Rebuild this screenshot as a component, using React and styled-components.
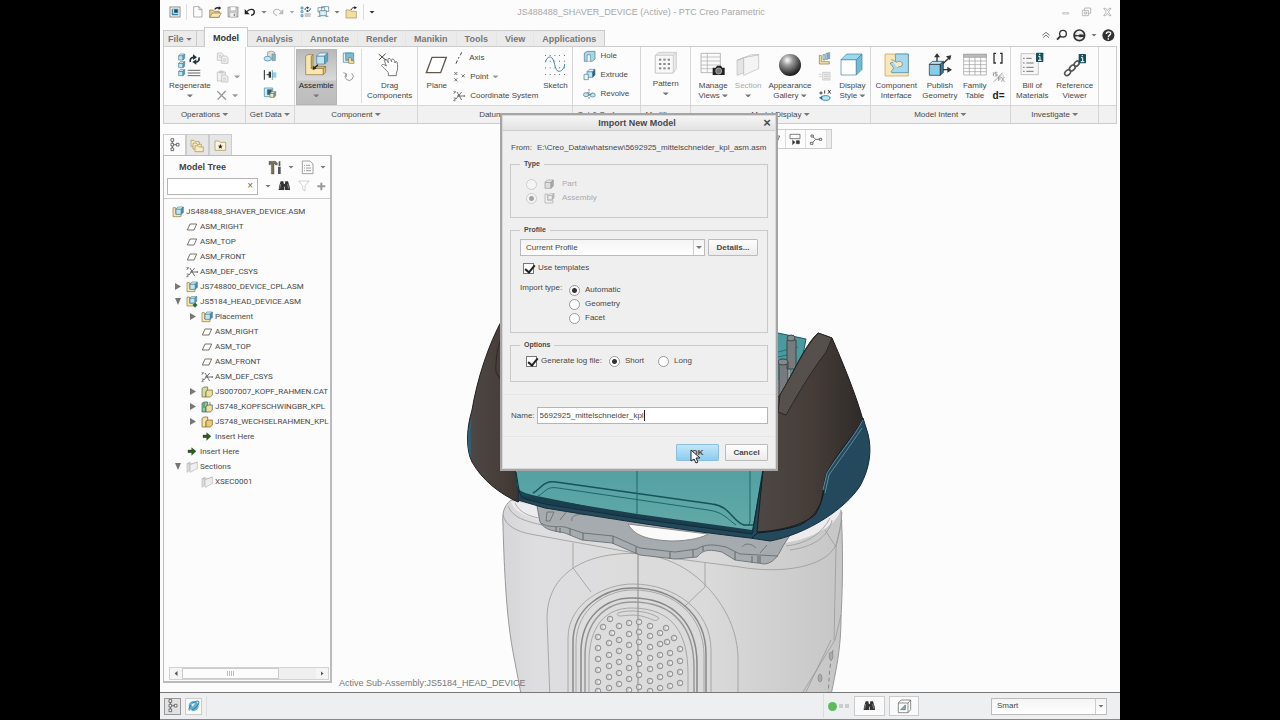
import React from 'react'
import styled, { createGlobalStyle, css } from 'styled-components'

const GlobalStyle = createGlobalStyle`
  * {
    box-sizing: border-box;
  }
  body {
    margin: 0;
    background: #000;
    color: #484848;
    font: 8px/10px "Liberation Sans", Arial, sans-serif;
  }
  button, input, select {
    margin: 0;
    padding: 0;
    border: 0;
    background: none;
    color: inherit;
    font: inherit;
  }
  ul {
    margin: 0;
    padding: 0;
    list-style: none;
  }
  svg {
    display: block;
    flex: none;
  }
`

/* ---------- icons ---------- */

const Cube = ({ x, y, w, d, front = '#bfe6f5', top = '#e4f5fb', side = '#5aa9c8', line = '#4a7f96' }) => (
  <g stroke={line} strokeWidth="2" strokeLinejoin="round">
    <path d={`M${x} ${y + d}h${w}v${w}h${-w}z`} fill={front} />
    <path d={`M${x} ${y + d}l${d} ${-d}h${w}l${-d} ${d}z`} fill={top} />
    <path d={`M${x + w} ${y + d}l${d} ${-d}v${w}l${-d} ${d}z`} fill={side} />
  </g>
)

const Binoculars = () => (
  <g fill="#333">
    <path d="M8 4h8l2 10v16H2l1-10z" />
    <path d="M22 4h8l5 16 1 10H20V14z" />
    <path d="M14 12h10v8H14z" />
    <path d="M8 12l-3 14M29 12l3 14" stroke="#aaa" strokeWidth="2" />
  </g>
)

const Axes = () => (
  <g stroke="#555" strokeWidth="2.5" fill="none">
    <path d="M12 18h18M8 28L26 6M12 6l14 24" />
    <path d="M2 3l5 6M8 3L2 12M2 24h6l-6 8h6M31 15l5 6M36 15l-5 6" strokeWidth="2" />
  </g>
)

const TreeNodes = () => (
  <g fill="#fff" stroke="#555" strokeWidth="2.5">
    <path d="M10 4v32M10 20h14" fill="none" />
    <path d="M6 2h8v8H6zM6 16h8v8H6zM6 30h8v8H6zM22 16h8v8h-8z" />
  </g>
)

const Info = ({ x, y }) => (
  <g>
    <rect x={x} y={y} width="22" height="28" rx="2" fill="#16505c" />
    <path d={`M${x + 7} ${y + 11}h5v11M${x + 6} ${y + 23}h11M${x + 9} ${y + 5}h4`} stroke="#fff" strokeWidth="3" fill="none" />
  </g>
)

// every drawing is on a grid of three units to one pixel
const icons = {
  app: [36, 36, <g><rect x="3" y="3" width="30" height="30" fill="#fff" stroke="#555" strokeWidth="2" /><path d="M8 8h20v20H8z" fill="#3b7f9c" /><path d="M13 8v14h15" stroke="#cfeaf5" strokeWidth="3" fill="none" /><path d="M17 12h8v7h-8z" fill="#17485e" /></g>],
  doc: [36, 36, <path d="M5 2h16l9 9v22H5zM21 2v9h9" fill="#fff" stroke="#888" strokeWidth="2" />],
  open: [39, 39, <g><path d="M2 12h11l4 4h14v18H2z" fill="#e9cd86" stroke="#8c7440" strokeWidth="2" /><path d="M2 34l8-13h27l-8 13z" fill="#f7e7b8" stroke="#8c7440" strokeWidth="2" /><path d="M17 10c5-6 10-6 15-2" stroke="#222" strokeWidth="4" fill="none" /><path d="M29 1l8 5-8 6z" fill="#222" /></g>],
  save: [36, 36, <g><path d="M3 3h30v30H3z" fill="#c9c9c9" stroke="#888" strokeWidth="2" /><path d="M10 3h16v11H10z" fill="#fff" stroke="#999" /><path d="M9 20h18v13H9z" fill="#f4f4f4" stroke="#999" /><path d="M20 23h4v8h-4z" fill="#888" /></g>],
  undo: [36, 30, <g><path d="M8 14C18 3 31 6 31 15c0 6-4 9-10 10" stroke="#222" strokeWidth="4" fill="none" /><path d="M2 6v16h15z" fill="#222" /></g>],
  redo: [36, 30, <g><path d="M28 14C18 3 5 6 5 15c0 6 4 9 10 10" stroke="#aaa" strokeWidth="3" fill="none" /><path d="M34 6v16H19z" fill="#bbb" /></g>],
  regenSmall: [36, 36, <g><path d="M3 3h6v6H3zM3 14h6v6H3zM3 26h6v6H3z" fill="#bfe6f5" stroke="#3b8099" strokeWidth="2" /><path d="M14 24h18M14 30h18" stroke="#666" strokeWidth="2" /><path d="M15 12c0-7 5-8 8-7M31 7c0 7-5 9-9 8" stroke="#1f5568" strokeWidth="3" fill="none" /><path d="M21 1l7 4-7 5zM24 11v8l-7-4z" fill="#1f5568" /></g>],
  windows: [39, 36, <g fill="#fff" stroke="#3d7389" strokeWidth="2"><path d="M3 5h20v13H3zM14 2h21v14H14z" /><path d="M8 14h20v15H8z" fill="#d9f0f8" /><path d="M2 31h9M25 31h9" /></g>],
  closeWin: [39, 39, <g><path d="M3 12h12l3 4h16v20H3z" fill="#f3dfa4" stroke="#a68c50" strokeWidth="2" /><path d="M18 12c2-6 7-8 12-7" stroke="#222" strokeWidth="3" fill="none" /><path d="M28 0l8 5-8 5z" fill="#222" /></g>],
  regenerate: [78, 75, <g><Cube x={5} y={3} w={13} d={5} /><Cube x={5} y={26} w={13} d={5} /><Cube x={5} y={50} w={13} d={5} /><path d="M32 52h38M32 60h38M32 68h38" stroke="#666" strokeWidth="3" /><path d="M40 27c-2-9 3-14 9-14M66 13c2 9-3 14-9 14" stroke="#20323a" strokeWidth="5" fill="none" /><path d="M48 4l12 9-12 8zM58 19v16l-12-8z" fill="#20323a" /></g>],
  copy: [42, 36, <g fill="#f2f2f2" stroke="#b5b5b5" strokeWidth="2"><path d="M4 3h13l5 5v17H4z" /><path d="M17 12h13l6 5v17H17zM21 21h10M21 27h10M8 10h7M8 15h7" /></g>],
  paste: [42, 39, <g fill="#f2f2f2" stroke="#b5b5b5" strokeWidth="2"><path d="M4 6h24v27H4zM11 3h10v6H11z" /><path d="M17 15h13l6 5v16H17zM21 24h10M21 30h10" /></g>],
  del: [36, 33, <path d="M4 4l26 25M29 3L5 29" stroke="#999" strokeWidth="4" />],
  geom: [42, 39, <g stroke="#888" strokeWidth="2"><path d="M14 6l12-3 9 4v20H14z" fill="#e2dfd8" /><ellipse cx="14" cy="26" rx="11" ry="7" fill="#bfe6f5" stroke="#3b8099" /><path d="M27 12h10v20H27z" fill="#7fb9cf" /></g>],
  shrink: [42, 36, <g><path d="M4 3v29M12 17h12" stroke="#222" strokeWidth="3" /><path d="M17 8h7v18h-7z" fill="#333" /><path d="M28 10h12v16H28z" fill="#93cfe8" /><path d="M28 3v30M16 17H8" stroke="#3b8099" strokeWidth="2" /></g>],
  copyGeom: [42, 39, <g stroke="#3b8099" strokeWidth="2"><path d="M4 3h25v26H4z" fill="#d5eef7" /><path d="M13 8h13v15H13z" fill="#256078" /><Cube x={21} y={14} w={12} d={5} front="#f5ecc4" line="#7c7140" /></g>],
  assemble: [75, 78, <g stroke="#8c7440" strokeWidth="2" strokeLinejoin="round"><path d="M5 14l5-6h17l-5 6v35h36v19H5z" fill="#f8e6ae" /><path d="M22 14l5-6v36l-5 5zM58 49l7-7v19l-7 7zM22 49l5-6h38l-7 6z" fill="#dcc07a" /><Cube x={38} y={3} w={24} d={9} /><path d="M42 38L29 50" stroke="#222" strokeWidth="4" /><path d="M26 54l2-12 9 8z" fill="#222" stroke="none" /></g>],
  create: [42, 39, <g stroke="#3b8099" strokeWidth="2"><path d="M4 3h26v28H4z" fill="#e7f2f5" /><path d="M11 3h24v22H11z" fill="#7dbbd3" /><path d="M20 17h8v9h8v8H20z" fill="#f5e4a8" stroke="#8c7440" /></g>],
  repeat: [42, 39, <g fill="none" stroke="#999" strokeWidth="3"><path d="M12 12a12 12 0 1 0 17 -2" /><path d="M4 8l9 3v10" /></g>],
  drag: [69, 75, <g stroke="#777" strokeWidth="3" fill="#fff" strokeLinecap="round" strokeLinejoin="round"><path d="M24 51c-6-6-12-10-13-14 1-5 8-3 14 2-3-9-8-17-4-20 4-1 8 4 10 10-2-7-2-13 2-13 5 0 6 6 8 11-1-6 0-9 4-9 4 1 5 6 6 12 1-5 4-6 6-3 3 8 3 23-2 34v7H31v-8z" /><path d="M3 4l20 17M22 3L4 20" stroke="#4d4636" strokeWidth="3" /></g>],
  plane: [69, 66, <path d="M21 10h43L47 56H4z" fill="#fff" stroke="#63574c" strokeWidth="4" />],
  axis: [36, 39, <path d="M9 35l4-10M16 20l2-5M22 10l4-9" stroke="#444" strokeWidth="3" />],
  points: [39, 36, <path d="M4 3l9 9M13 3l-9 9M26 10l9 9M35 10l-9 9M4 22l9 9M13 22l-9 9" stroke="#555" strokeWidth="2.5" />],
  csys: [39, 36, <Axes />],
  sketch: [69, 66, <g><g fill="#777">{[3, 17, 31, 45, 60].map(x => [3, 20, 40, 60].map(y => <rect key={x + '-' + y} x={x} y={y} width="3" height="3" />))}</g><path d="M4 25C9 6 23 3 29 21c5 15 6 32 17 31 10-1 16-14 16-22" fill="none" stroke="#2f8cb0" strokeWidth="3" /></g>],
  hole: [39, 39, <g><path d="M4 9l8-5h24v23l-8 7h-6V15h-9v19H4z" fill="#a9d6e7" stroke="#47788c" strokeWidth="2" /><path d="M13 15h9v19h-9z" fill="#f2fafd" stroke="#47788c" /></g>],
  extrude: [39, 39, <g stroke="#47788c" strokeWidth="2"><Cube x={12} y={4} w={17} d={7} side="#256078" /><path d="M3 19h13v16H3z" fill="#e9f4f8" /></g>],
  revolve: [39, 36, <g fill="#bfe6f5" stroke="#47788c" strokeWidth="2"><ellipse cx="9" cy="20" rx="8" ry="6" /><ellipse cx="29" cy="21" rx="8" ry="6" /><path d="M18 3v30" stroke="#333" strokeDasharray="5 3" /><path d="M12 12c5 8 11 10 17 3" fill="none" /></g>],
  pattern: [72, 75, <g><path d="M4 13L13 4h54v49l-9 13H4z" fill="#e9e9e9" stroke="#c0c0c0" strokeWidth="2" /><path d="M4 13h54v53H4z" fill="#f8f8f8" stroke="#c0c0c0" strokeWidth="2" /><path d="M58 13l9-9" stroke="#c0c0c0" strokeWidth="2" />{[15, 28, 41].map(x => [23, 36, 49].map(y => <path key={x + '-' + y} d={`M${x} ${y}h7v6h-7z`} fill="#8b8b8b" />))}</g>],
  manage: [78, 78, <g><path d="M3 4h58v58H3z" fill="#fafafa" stroke="#999" strokeWidth="2" /><path d="M3 15h58M3 27h58M3 39h58M3 50h58M22 4v58" stroke="#aaa" strokeWidth="2" /><path d="M38 47h9l4-6h12l4 6h7v22H38z" fill="#222" /><circle cx="56" cy="57" r="9" fill="#777" stroke="#ccc" strokeWidth="2" /></g>],
  section: [72, 75, <g stroke="#bbb" strokeWidth="2"><path d="M3 22l20-8v46L3 67z" fill="#e5e5e5" /><path d="M23 14L68 5v42L23 67z" fill="#f4f4f4" /><path d="M3 22L46 5h22l-45 9z" fill="#fafafa" /></g>],
  display: [72, 75, <Cube x={3} y={3} w={46} d={17} front="#fcfefe" top="#9adaf0" side="#6fbcd8" />],
  scale: [39, 39, <g fill="#d9eef6" stroke="#47788c" strokeWidth="2"><path d="M4 10h6v19h24v7H4z" fill="#f5e4a8" stroke="#8c7440" /><path d="M15 8h6v16h-6zM24 4h5v18h-5zM31 2h4v18h-4z" /></g>],
  notes: [39, 33, <g fill="#eee" stroke="#bbb" strokeWidth="2"><path d="M14 4h22v23H14zM3 10h8M3 17h8M18 10h14M18 16h14M18 22h14" /></g>],
  transform: [42, 39, <g><path d="M4 12h10M9 7v10M20 4v10M30 3l8 11M38 3l-8 11" stroke="#222" strokeWidth="2.5" /><ellipse cx="23" cy="27" rx="13" ry="7" fill="#bfe6f5" stroke="#2f8cb0" strokeWidth="3" /><path d="M13 20L3 26l10 7z" fill="#2f6c84" /></g>],
  iface: [75, 75, <g strokeWidth="2"><path d="M3 3h70v66H3z" fill="#fbe6b6" stroke="#b79c5c" /><path d="M35 3h38v56H23c-4-5 2-7 5-11 3-6-9-12-9-18 7-4 11-2 15-7 3-7-3-14 1-20z" fill="#a8d8ee" stroke="#3b7f9c" /><path d="M22 20c10 1 11 9 19 7 8-6 18 3 13 11-4 5-10 1-14 6" fill="#fbe6b6" stroke="#3b7f9c" /></g>],
  publish: [72, 75, <g><path d="M27 4v28M30 46l34-32M30 50h37" stroke="#333" strokeWidth="4" /><path d="M27 1l-9 12h18zM70 7l-16 3 12 12zM72 50l-14-9v18z" fill="#333" /><Cube x={4} y={25} w={33} d={9} front="#86cdea" top="#b9e5f5" side="#347f9f" line="#222" /></g>],
  family: [72, 72, <g stroke="#999" strokeWidth="2"><path d="M2 4h68v62H2z" fill="#fff" /><path d="M2 4h68v9H2z" fill="#bbb" /><path d="M2 24h68M2 35h68M2 46h68M2 56h68M19 13v53M36 13v53M53 13v53" /></g>],
  brackets: [36, 39, <path d="M12 4H6v29h6M24 4h6v29h-6" fill="none" stroke="#333" strokeWidth="4" />],
  dim: [39, 36, <g stroke="#888" strokeWidth="2.5" fill="none"><path d="M4 4v11M9 4h7M9 4v5h6v6H9M32 5L6 32M20 30V18h8M19 24h7M28 18l9 14M37 18l-9 14" /><path d="M24 12h10v20" stroke="#ccc" /></g>],
  bom: [72, 78, <g><path d="M3 5h42l10 10v53H3z" fill="#f6f6f6" stroke="#aaa" strokeWidth="2" /><path d="M19 19h16M19 33h22M19 46h22M19 58h22M9 19h5M9 33h5M9 46h5M9 58h5" stroke="#777" strokeWidth="3" /><Info x={48} y={2} /></g>],
  viewer: [72, 75, <g><g fill="none" stroke="#555" strokeWidth="5"><ellipse cx="14" cy="59" rx="10" ry="7" transform="rotate(-45 14 59)" /><ellipse cx="28" cy="45" rx="10" ry="7" transform="rotate(-45 28 45)" /><ellipse cx="41" cy="32" rx="9" ry="6" transform="rotate(-45 41 32)" /></g><Info x={47} y={3} /></g>],
  chevrons: [30, 24, <path d="M4 13L15 4l11 9M6 20l9-8 9 8" fill="none" stroke="#555" strokeWidth="2.5" />],
  search: [36, 36, <g fill="none" stroke="#333"><circle cx="21" cy="14" r="10" strokeWidth="4" /><path d="M13 22L3 32" strokeWidth="6" /></g>],
  learn: [39, 39, <g><circle cx="19" cy="19" r="16" fill="#eee" stroke="#333" strokeWidth="5" /><path d="M3 16l12 3 6-3 15 1v6l-15 2-6-3-12 1z" fill="#333" /></g>],
  help: [39, 39, <g><circle cx="19" cy="19" r="18" fill="#333" /><path d="M13 15c0-9 14-8 13-1-1 5-7 4-7 11M19 28v4" fill="none" stroke="#fff" strokeWidth="4" /></g>],
  min: [30, 30, <path d="M5 17h18v4H5z" fill="#fff" stroke="#aaa" strokeWidth="2" />],
  restore: [33, 30, <g fill="#fff" stroke="#999" strokeWidth="2"><path d="M11 3h18v16H11z" /><path d="M4 10h18v16H4zM10 15h7v6h-7z" /></g>],
  close: [33, 30, <path d="M5 4h6l5 7 5-7h6l-8 11 8 11h-6l-5-7-5 7H5l8-11z" fill="#fff" stroke="#999" strokeWidth="2" />],
  nodes: [33, 42, <TreeNodes />],
  folders: [45, 45, <g fill="#f9edc6" stroke="#a68c50" strokeWidth="2"><path d="M3 7h9l3 4h13v14H3z" /><path d="M9 15h9l3 4h13v14H9z" /><path d="M15 23h9l3 4h13v14H15z" /></g>],
  favorite: [39, 39, <g><path d="M3 6h12l4 4h16v24H3z" fill="#fbf4da" stroke="#a68c50" strokeWidth="2" /><path d="M19 14l2 6h6l-5 3 2 6-5-3-5 3 2-6-5-3h6z" fill="#222" /></g>],
  tools: [42, 45, <g><path d="M3 4h20l5 6v5h-5l-3-4h-2v31h-8V12l-7 3z" fill="#7b7159" stroke="#333" strokeWidth="1" /><path d="M32 4h5v14h-5zM30 20h8v22h-8z" fill="#555" /></g>],
  settings: [42, 45, <g><path d="M4 3h23l9 9v29H4z" fill="#fbfbfb" stroke="#777" strokeWidth="2" /><path d="M15 16h12M15 24h15M15 32h15M9 16h3M9 24h3M9 32h3" stroke="#777" strokeWidth="2" /></g>],
  find: [39, 36, <Binoculars />],
  filter: [36, 36, <path d="M2 3h31L21 18v15l-7-5V18z" fill="#fff" stroke="#bbb" strokeWidth="2" />],
  plus: [27, 27, <path d="M10 2h6v8h9v6h-9v9h-6v-9H1v-6h9z" fill="#999" />],
  asm: [36, 36, <g strokeWidth="2"><path d="M3 5h8v19h16v8H3z" fill="#f8e6ae" stroke="#8c7440" /><Cube x={12} y={3} w={16} d={6} side="#3b8fb3" /></g>],
  asmActive: [36, 36, <g strokeWidth="2"><path d="M3 3h8v19h14v8H3z" fill="#f8e6ae" stroke="#8c7440" /><Cube x={12} y={1} w={15} d={5} /><path d="M27 19l8 8-8 8-8-8z" fill="#1e6b2c" stroke="#fff" strokeWidth="1" /></g>],
  datum: [36, 30, <path d="M12 6h20l-8 18H4z" fill="#fff" stroke="#63574c" strokeWidth="2.5" />],
  part: [36, 36, <g stroke="#6b5a2c" strokeWidth="2"><path d="M3 7l6-4h11v10l-5 3v17H3z" fill="#cfe0a6" /><path d="M15 16l6-4h13v15l-6 6H15z" fill="#f3df9c" /></g>],
  partB: [36, 36, <g stroke="#6b5a2c" strokeWidth="2"><path d="M3 7l6-4h11v10l-5 3v17H3z" fill="#f6e3a2" /><path d="M15 16l6-4h13v15l-6 6H15z" fill="#efc96f" /></g>],
  partC: [36, 36, <g stroke="#2e5a44" strokeWidth="2"><path d="M3 7l6-4h11v10l-5 3v17H3z" fill="#8fc7a9" /><path d="M15 16l6-4h13v15l-6 6H15z" fill="#f3df9c" /><path d="M9 5v16M27 3v9" /></g>],
  insert: [30, 27, <path d="M3 9h11V2l13 11-13 12v-8H3z" fill="#2d5a22" stroke="#173a10" strokeWidth="1" />],
  xsec: [39, 36, <g stroke="#b8b8b8" strokeWidth="2"><path d="M3 8l9-5v24l-9 7z" fill="#dcdcdc" /><path d="M12 11l22-8v20l-22 11z" fill="#efefef" /><path d="M3 8h18l13-5" fill="none" /></g>],
  partGrey: [33, 33, <Cube x={3} y={3} w={18} d={7} front="#ddd" top="#eee" side="#aaa" line="#999" />],
  asmGrey: [33, 33, <g strokeWidth="2"><path d="M3 3h8v19h16v8H3z" fill="#eee" stroke="#aaa" /><Cube x={12} y={2} w={13} d={5} front="#eee" top="#f5f5f5" side="#bbb" line="#aaa" /></g>],
  browser: [42, 42, <g><circle cx="20" cy="21" r="15" fill="#5fb0d0" /><path d="M7 35C1 26 20 6 33 6c8 2-2 20-18 27" fill="none" stroke="#2d7797" strokeWidth="3" /><path d="M12 18c3-5 8-6 12-5l-6 10z" fill="#d8f1fa" /></g>],
  region: [45, 45, <g fill="#fff" stroke="#555" strokeWidth="2"><path d="M4 12L12 3h29v29l-8 9H4zM4 12h29v29M33 12l8-9" /><path d="M25 18v14H11l14-14z" fill="#7fb9cf" /></g>],
  spin: [42, 39, <g stroke="#555" strokeWidth="2.5" fill="#fff"><path d="M10 10l10 9M20 19h14M20 19L8 31" /><path d="M6 6h7v6H6zM31 16h7v6h-7zM4 28h8v6H4z" /></g>],
  layers: [42, 39, <g fill="#fff" stroke="#444" strokeWidth="2"><path d="M6 4h30v13H6z" /><path d="M13 21l8 7-8 7M25 23h9v9h-9z" fill="#333" /></g>],
}

const Icon = ({ name, label }) => {
  const [w, h, art] = icons[name]
  return (
    <svg width={w / 3} height={h / 3} viewBox={`0 0 ${w} ${h}`} aria-hidden={!label} aria-label={label}>
      {art}
    </svg>
  )
}

const Ball = () => (
  <svg width="24" height="24" viewBox="0 0 24 24" aria-hidden="true">
    <defs>
      <radialGradient id="ball" cx="38%" cy="28%" r="70%">
        <stop offset="0" stopColor="#fff" />
        <stop offset=".35" stopColor="#999" />
        <stop offset="1" stopColor="#1d1d1d" />
      </radialGradient>
    </defs>
    <circle cx="12" cy="12" r="11" fill="url(#ball)" />
  </svg>
)

const Caret = styled.span`
  display: inline-block;
  flex: none;
  width: 6px;
  height: 3px;
  vertical-align: middle;
  background: ${props => props.color || '#777'};
  clip-path: polygon(0 0, 100% 0, 50% 100%);
`

/* ---------- window, title bar, tabs ---------- */

const Page = styled.div`
  min-height: 100vh;
  padding: 0 12.5%;
  display: flex;
`

const Window = styled.div`
  position: relative;
  flex: 1;
  min-width: 0;
  display: flex;
  flex-direction: column;
  background: #fcfcfc;
`

const TitleBar = styled.header`
  height: 24px;
  padding: 0 7px 0 9px;
  display: grid;
  grid-template-columns: 1fr auto 1fr;
  align-items: center;
`

const QuickAccess = styled.div`
  display: flex;
  align-items: center;
  gap: 5px;
`

const PlainButton = styled.button`
  display: flex;
  align-items: center;
  justify-content: center;
  gap: ${props => props.$gap || 0}px;
  cursor: pointer;
`

const Rule = styled.span`
  width: 1px;
  height: ${props => props.$h || 16}px;
  background: #ddd;
`

const Title = styled.h1`
  margin: 0;
  color: #a8a8a8;
  font-size: 9px;
  font-weight: normal;
`

const WindowButtons = styled.div`
  display: flex;
  justify-content: flex-end;
  gap: 10px;
`

const TabRow = styled.div`
  height: 22px;
  padding: 0 5px 0 3px;
  display: flex;
  align-items: flex-end;
  justify-content: space-between;
`

const Tabs = styled.nav`
  display: flex;
  align-items: flex-end;
`

const Tab = styled.button`
  height: 16px;
  padding: 0 ${props => props.$pad || 8}px;
  border-top: 1px solid #ccc;
  border-right: 1px solid #e4e4e4;
  background: #ebebeb;
  color: #777;
  font-size: 9px;
  font-weight: bold;
  &:first-child {
    border-left: 1px solid #ccc;
    border-right-color: #ccc;
  }
  &:last-child {
    border-right-color: #ccc;
  }
  ${props => props.$active && css`
    height: 20px;
    margin-bottom: -1px;
    border: 1px solid #ccc;
    border-bottom: 0;
    background: #fcfcfc;
    color: #333;
    z-index: 1;
  `}
`

const Helpers = styled.div`
  height: 22px;
  display: flex;
  align-items: center;
  gap: 5px;
`

/* ---------- ribbon ---------- */

const RibbonBar = styled.div`
  height: 78px;
  margin: 0 3px;
  display: flex;
  border: 1px solid #ccc;
`

const Group = styled.section`
  flex: ${props => props.$span} 1 0;
  min-width: 0;
  display: flex;
  flex-direction: column;
  border-right: 1px solid #d6d6d6;
  &:last-child {
    border-right: 0;
  }
`

const GroupBody = styled.div`
  flex: 1;
  padding: 2px ${props => props.$right || props.$pad}px 0 ${props => props.$pad}px;
  display: flex;
  justify-content: ${props => props.$center ? 'center' : 'space-between'};
`

const GroupName = styled.button`
  height: 18px;
  border-top: 1px solid #d6d6d6;
  background: #f1f1f1;
  white-space: nowrap;
`

const BigButton = styled.button`
  height: 56px;
  padding: 2px ${props => props.$active ? 2 : 0}px 0;
  display: flex;
  flex-direction: column;
  align-items: center;
  white-space: nowrap;
  color: ${props => props.$dim ? '#aaa' : '#484848'};
  ${props => props.$active && css`
    padding-top: 1px;
    border: 1px solid #b5b5b5;
    background: linear-gradient(#b9b9b9, #d9d9d9 30px, #c4c4c4 31px, #bcbcbc);
    color: #222;
  `}
`

const BigIcon = styled.span`
  height: 28px;
  margin-bottom: 2px;
  display: flex;
  align-items: center;
`

const Stack = styled.div`
  height: 56px;
  display: grid;
  grid-template-rows: repeat(3, 1fr);
  align-items: center;
`

const SmallButton = styled.button`
  display: flex;
  align-items: center;
  gap: 4px;
  white-space: nowrap;
`

const Relations = styled.button`
  color: #222;
  font-size: 10px;
  font-weight: bold;
`

const Big = ({ icon, lines, caret, art, ...rest }) => (
  <BigButton {...rest}>
    <BigIcon>{art || <Icon name={icon} />}</BigIcon>
    {lines.map((line, i) => (
      <span key={line}>
        {line}
        {caret && i > 0 && <> <Caret /></>}
      </span>
    ))}
    {caret && lines.length === 1 && <span><Caret /></span>}
  </BigButton>
)

const Small = ({ icon, label, text, caret }) => (
  <SmallButton aria-label={label}>
    <Icon name={icon} />
    {text}
    {caret && <Caret color="#999" />}
  </SmallButton>
)

const ribbonTabs = ['Analysis', 'Annotate', 'Render', 'Manikin', 'Tools', 'View', 'Applications']

const Ribbon = () => (
  <RibbonBar>
    <Group $span={82}>
      <GroupBody $pad={5}>
        <Big icon="regenerate" lines={['Regenerate']} caret />
        <Stack>
          <Small icon="copy" label="Copy" />
          <Small icon="paste" label="Paste" caret />
          <Small icon="del" label="Delete" caret />
        </Stack>
      </GroupBody>
      <GroupName>Operations <Caret /></GroupName>
    </Group>
    <Group $span={48}>
      <GroupBody $center>
        <Stack>
          <Small icon="geom" label="User-Defined Feature" />
          <Small icon="shrink" label="Shrinkwrap" />
          <Small icon="copyGeom" label="Copy Geometry" />
        </Stack>
      </GroupBody>
      <GroupName>Get Data <Caret /></GroupName>
    </Group>
    <Group $span={124}>
      <GroupBody $pad={1} $right={5}>
        <Big icon="assemble" lines={['Assemble']} caret $active />
        <Stack>
          <Small icon="create" label="Create" />
          <Small icon="repeat" label="Repeat" />
        </Stack>
        <Rule $h={54} />
        <Big icon="drag" lines={['Drag', 'Components']} />
      </GroupBody>
      <GroupName>Component <Caret /></GroupName>
    </Group>
    <Group $span={155}>
      <GroupBody $pad={7} $right={4}>
        <Big icon="plane" lines={['Plane']} />
        <Stack>
          <Small icon="axis" text="Axis" />
          <Small icon="points" text="Point" caret />
          <Small icon="csys" text="Coordinate System" />
        </Stack>
        <Big icon="sketch" lines={['Sketch']} />
      </GroupBody>
      <GroupName>Datum <Caret /></GroupName>
    </Group>
    <Group $span={68}>
      <GroupBody $center>
        <Stack>
          <Small icon="hole" text="Hole" />
          <Small icon="extrude" text="Extrude" />
          <Small icon="revolve" text="Revolve" />
        </Stack>
      </GroupBody>
      <GroupName>Cut &amp; Surface <Caret /></GroupName>
    </Group>
    <Group $span={50}>
      <GroupBody $center>
        <Big icon="pattern" lines={['Pattern']} caret />
      </GroupBody>
      <GroupName>Modifiers <Caret /></GroupName>
    </Group>
    <Group $span={180}>
      <GroupBody $pad={7} $right={4}>
        <Big icon="manage" lines={['Manage', 'Views']} caret />
        <Big icon="section" lines={['Section']} caret $dim />
        <Big art={<Ball />} lines={['Appearance', 'Gallery']} caret />
        <Stack>
          <Small icon="scale" label="Edit Position" />
          <Small icon="notes" label="Annotations" />
          <Small icon="transform" label="Transform" />
        </Stack>
        <Big icon="display" lines={['Display', 'Style']} caret />
      </GroupBody>
      <GroupName>Model Display <Caret /></GroupName>
    </Group>
    <Group $span={141}>
      <GroupBody $pad={5}>
        <Big icon="iface" lines={['Component', 'Interface']} />
        <Big icon="publish" lines={['Publish', 'Geometry']} />
        <Big icon="family" lines={['Family', 'Table']} />
        <Stack>
          <Small icon="brackets" label="Parameters" />
          <Small icon="dim" label="Switch Dimensions" />
          <Relations>d=</Relations>
        </Stack>
      </GroupBody>
      <GroupName>Model Intent <Caret /></GroupName>
    </Group>
    <Group $span={88}>
      <GroupBody $pad={5}>
        <Big icon="bom" lines={['Bill of', 'Materials']} />
        <Big icon="viewer" lines={['Reference', 'Viewer']} />
      </GroupBody>
      <GroupName>Investigate <Caret /></GroupName>
    </Group>
    <Group $span={17}>
      <GroupBody />
      <GroupName aria-label="More" />
    </Group>
  </RibbonBar>
)

/* ---------- model tree ---------- */

const Workspace = styled.main`
  flex: 1;
  min-height: 0;
  display: flex;
`

const Side = styled.aside`
  flex: none;
  width: 172px;
  padding: 10px 0 9px 3px;
  display: flex;
  flex-direction: column;
`

const SideTabs = styled.div`
  display: flex;
`

const SideTab = styled.button`
  width: 23px;
  height: 21px;
  display: flex;
  align-items: center;
  justify-content: center;
  border: 1px solid #ccc;
  border-bottom: 0;
  background: ${props => props.$active ? '#fcfcfc' : '#e6e6e6'};
`

const Panel = styled.div`
  flex: 1;
  min-height: 0;
  display: flex;
  flex-direction: column;
  border: 1px solid #bbb;
  border-right: 2px solid #bbb;
  border-bottom: 2px solid #bbb;
`

const PanelHead = styled.div`
  height: 22px;
  padding: 0 4px 0 15px;
  display: flex;
  align-items: center;
  gap: 7px;
`

const PanelTitle = styled.h2`
  flex: 1;
  margin: 0;
  color: #444;
  font-size: 9px;
`

const SearchRow = styled.div`
  height: 21px;
  padding: 0 4px 4px 3px;
  display: flex;
  align-items: center;
  justify-content: space-between;
  border-bottom: 1px solid #ccc;
`

const SearchBox = styled.label`
  width: 91px;
  height: 17px;
  padding: 0 4px;
  display: flex;
  align-items: center;
  border: 1px solid #b5b5b5;
  background: #fff;
  input {
    flex: 1;
    min-width: 0;
    outline: 0;
  }
  button {
    color: #666;
    font-size: 10px;
  }
`

const Tree = styled.ul`
  flex: 1;
  padding-top: 5px;
  overflow: hidden;
  font-family: Roboto, "Liberation Sans", sans-serif;
`

const TreeRow = styled.li`
  height: 15px;
  padding-left: ${props => props.$depth ? props.$depth * 15 - 4 : 8}px;
  display: flex;
  align-items: center;
  gap: 2px;
  white-space: nowrap;
`

const Arrow = styled.span`
  width: 6px;
  height: 7px;
  margin-right: 3px;
  flex: none;
  ${props => props.$state && css`
    background: #777;
    clip-path: ${props.$state === 'open' ? 'polygon(0 0, 100% 0, 50% 100%)' : 'polygon(0 0, 100% 50%, 0 100%)'};
  `}
`

const TreeIcon = styled.span`
  width: 12px;
  display: flex;
  justify-content: center;
`

const ScrollBar = styled.div`
  height: 13px;
  margin: 0 1px 1px 5px;
  display: grid;
  grid-template-columns: 12px 97px 1fr 12px;
  border: 1px solid #d2d2d2;
  background: #efefef;
`

const ScrollEnd = styled.button`
  display: flex;
  align-items: center;
  justify-content: center;
  background: #f5f5f5;
  &:before {
    content: '';
    width: 3px;
    height: 5px;
    background: #555;
    clip-path: ${props => props.$right ? 'polygon(0 0, 100% 50%, 0 100%)' : 'polygon(100% 0, 0 50%, 100% 100%)'};
  }
`

const Thumb = styled.div`
  border: 1px solid #ccc;
  background: #fcfcfc;
  display: flex;
  align-items: center;
  justify-content: center;
  &:before {
    content: '';
    width: 8px;
    height: 5px;
    background: repeating-linear-gradient(90deg, #bbb 0 1px, transparent 1px 2px);
  }
`

const nodes = [
  { depth: 0, icon: 'asm', name: 'JS488488_SHAVER_DEVICE.ASM' },
  { depth: 1, icon: 'datum', name: 'ASM_RIGHT' },
  { depth: 1, icon: 'datum', name: 'ASM_TOP' },
  { depth: 1, icon: 'datum', name: 'ASM_FRONT' },
  { depth: 1, icon: 'csys', name: 'ASM_DEF_CSYS' },
  { depth: 1, icon: 'asm', name: 'JS748800_DEVICE_CPL.ASM', state: 'closed' },
  { depth: 1, icon: 'asmActive', name: 'JS5184_HEAD_DEVICE.ASM', state: 'open' },
  { depth: 2, icon: 'asm', name: 'Placement', state: 'closed' },
  { depth: 2, icon: 'datum', name: 'ASM_RIGHT' },
  { depth: 2, icon: 'datum', name: 'ASM_TOP' },
  { depth: 2, icon: 'datum', name: 'ASM_FRONT' },
  { depth: 2, icon: 'csys', name: 'ASM_DEF_CSYS' },
  { depth: 2, icon: 'part', name: 'JS007007_KOPF_RAHMEN.CAT', state: 'closed' },
  { depth: 2, icon: 'partC', name: 'JS748_KOPFSCHWINGBR_KPL', state: 'closed' },
  { depth: 2, icon: 'partB', name: 'JS748_WECHSELRAHMEN_KPL', state: 'closed' },
  { depth: 2, icon: 'insert', name: 'Insert Here' },
  { depth: 1, icon: 'insert', name: 'Insert Here' },
  { depth: 1, icon: 'xsec', name: 'Sections', state: 'open' },
  { depth: 2, icon: 'xsec', name: 'XSEC0001' },
]

const ModelTree = () => (
  <Side>
    <SideTabs>
      <SideTab $active aria-label="Model Tree"><Icon name="nodes" /></SideTab>
      <SideTab aria-label="Folder Browser"><Icon name="folders" /></SideTab>
      <SideTab aria-label="Favorites"><Icon name="favorite" /></SideTab>
    </SideTabs>
    <Panel>
      <PanelHead>
        <PanelTitle>Model Tree</PanelTitle>
        <PlainButton $gap={6} aria-label="Tree settings"><Icon name="tools" /><Caret /></PlainButton>
        <PlainButton $gap={5} aria-label="Show"><Icon name="settings" /><Caret /></PlainButton>
      </PanelHead>
      <SearchRow>
        <SearchBox>
          <input type="text" aria-label="Search tree" />
          <button aria-label="Clear">×</button>
        </SearchBox>
        <Caret />
        <PlainButton aria-label="Find"><Icon name="find" /></PlainButton>
        <PlainButton aria-label="Filter"><Icon name="filter" /></PlainButton>
        <PlainButton aria-label="Add"><Icon name="plus" /></PlainButton>
      </SearchRow>
      <Tree>
        {nodes.map((node, i) => (
          <TreeRow key={i} $depth={node.depth}>
            {node.depth > 0 && <Arrow $state={node.state} />}
            <TreeIcon><Icon name={node.icon} /></TreeIcon>
            {node.name}
          </TreeRow>
        ))}
      </Tree>
      <ScrollBar>
        <ScrollEnd aria-label="Scroll left" />
        <Thumb />
        <span />
        <ScrollEnd $right aria-label="Scroll right" />
      </ScrollBar>
    </Panel>
  </Side>
)

/* ---------- graphics area ---------- */

const Viewport = styled.section`
  position: relative;
  flex: 1;
  min-width: 0;
  padding: 5px 7px 4px;
  display: flex;
  flex-direction: column;
  justify-content: space-between;
  overflow: hidden;
`

const Model = styled.svg`
  position: absolute;
  inset: 0;
  width: 100%;
  height: 100%;
`

const ViewTools = styled.div`
  position: relative;
  width: 211px;
  height: 20px;
  align-self: center;
  display: flex;
  justify-content: flex-end;
  padding-right: 4px;
  border: 1px solid #ccc;
  background: #ececec;
`

const ViewTool = styled.button`
  flex: 1;
  display: flex;
  align-items: center;
  justify-content: center;
  border-right: 1px solid #ddd;
  background: #fcfcfc;
`

const ActiveNote = styled.p`
  position: relative;
  margin: 0;
  color: #777;
  font-size: 9px;
`

const viewTools = [
  ['search', 'Refit'], ['search', 'Zoom In'], ['search', 'Zoom Out'], ['doc', 'Repaint'], ['windows', 'Saved Views'],
  ['region', 'Display Style'], ['nodes', 'View Manager'], ['datum', 'Datum Filters'], ['layers', 'Annotations'], ['spin', 'Spin Center'],
]

// grip dots: x of the column, then the y of each dot
const studs = [
  [598, 637, 648, 659, 670, 682, 691],
  [603, 627],
  [610, 619],
  [612, 633],
  [609, 643, 655, 666, 677, 688],
  [619, 626, 640, 651, 662, 673, 684],
  [629, 623, 634, 645, 657, 668, 679, 690],
  [639, 622, 632, 642, 653, 664, 675, 687],
  [650, 626, 636, 647, 658, 669, 681, 691],
  [660, 633, 644, 655, 666, 677, 688],
  [666, 628],
  [667, 642],
  [670, 653, 663, 674, 686],
  [674, 638],
  [680, 649, 661, 672, 683],
]

// arch centred on the handle, from the bottom edge up to `top` and down again
const arch = (left, right, top) => {
  const mid = (left + right) / 2 - 7
  return `M${left} 700V${top + 54}C${left} ${top + 18} ${mid - 26} ${top} ${mid} ${top}C${mid + 42} ${top} ${right} ${top + 26} ${right} ${top + 66}V700`
}

const Shaver = () => (
  <Model viewBox="332 124 788 568" preserveAspectRatio="xMidYMax slice" aria-label="Shaver assembly">
    <defs>
      <linearGradient id="body">
        <stop offset="0" stopColor="#d6d6d8" />
        <stop offset=".1" stopColor="#dedee0" />
        <stop offset=".6" stopColor="#dadada" />
        <stop offset="1" stopColor="#c6c6c6" />
      </linearGradient>
      <linearGradient id="shell">
        <stop offset="0" stopColor="#4d4846" />
        <stop offset=".5" stopColor="#463d39" />
        <stop offset="1" stopColor="#2f2b29" />
      </linearGradient>
      <linearGradient id="glass" x1="0" x2="0" y1="0" y2="1">
        <stop offset="0" stopColor="#54a0a2" />
        <stop offset="1" stopColor="#62aaa8" />
      </linearGradient>
    </defs>
    <path d="M511 500C504 506 502 512 503 525C504 565 506 600 509 625C512 652 517 670 522 700H830C836 670 841 650 841 617C843 580 843 545 841 510L800 520Z" fill="url(#body)" stroke="#999" />
    <path d="M511 501C514 516 540 520 560 524L760 545C800 545 833 530 840 512L843 500L780 535L560 510Z" fill="#ececee" />
    <g fill="none" stroke="#999" strokeWidth=".8">
      <path d="M503 515C506 526 516 531 530 534L640 554L740 567C780 574 825 568 836 545C839 535 841 524 842 512" />
      <path d="M508 506C513 518 525 521 542 525M515 503C520 514 532 517 544 519M790 550C812 547 828 538 832 520M786 546C806 544 822 534 830 518" />
      <path d="M825 530L836 547L834 640M842 520L836 547M573 543V568L591 592M705 563V587L684 607" />
      <path d="M550 700L547 618C547 580 575 560 610 555C660 547 695 570 715 596C732 618 738 640 738 660V700" />
      <path d="M638 553V700" stroke="#777" />
      <path d={arch(568, 711, 584)} />
      <path d={arch(573, 706, 588)} stroke="#888" strokeWidth="1.5" />
      <path d={arch(576, 704, 590)} />
      <path d={arch(581, 697, 598)} stroke="#888" strokeWidth="1.5" />
      <path d={arch(585, 694, 602)} strokeWidth="1.5" />
      <path d={arch(589, 688, 608)} />
      <path d="M618 613C628 609 650 611 659 618C656 623 652 619 648 618C638 614 630 615 621 616C618 616 616 615 618 613Z" />
      <path d="M803 692L835 640L841 615M831 640L806 692" />
      <path d="M833 650C829 668 829 680 828 700" stroke="#777" strokeDasharray="4 3" />
    </g>
    <ellipse cx="831" cy="656" rx="2" ry="4" fill="#aaa" stroke="#777" strokeWidth=".5" />
    <ellipse cx="820" cy="678" rx="2" ry="4" fill="#aaa" stroke="#777" strokeWidth=".5" />
    <g fill="#cfcfcf" stroke="#808080" strokeWidth=".8">
      {studs.map(([x, ...ys]) => ys.map(y => <circle key={`${x}-${y}`} cx={x} cy={y} r="2.8" />))}
    </g>
    <g fill="#f6f6f6">
      {studs.map(([x, ...ys]) => ys.map(y => <circle key={`${x}-${y}`} cx={x + 1} cy={y} r="1" />))}
    </g>

    <path d="M537 506L540 522C545 531 556 531 565 533L582 540L612 543L640 555L675 559L697 557C704 548 712 550 722 552L735 560L765 564C776 562 779 553 783 546L790 535L720 520Z" fill="#a5abae" stroke="#74797c" />
    <path d="M541 523C548 528 556 526 565 527L583 533L613 536L640 548L675 552L697 549C706 543 716 545 726 547L740 554L778 556" fill="none" stroke="#6f7477" />
    <path d="M556 527v5M560 528v5M570 529v6M583 533v7M613 536v8M636 547v7M670 552v7M693 550v7M703 546v5M735 552v8M752 556v7M758 556v7M760 556v7" stroke="#666" />
    <path d="M547 512h7l-4 9h-4zM560 520l7-9M572 521c-2-5 6-8 14-6M742 547c4-5 10-3 14 1M760 553l7-8" fill="none" stroke="#777" />
    <path d="M628 524C634 535 646 540 672 541C690 541 704 537 708 534Z" fill="#fafafa" stroke="#888" />

    <path d="M760 339L778 333L806 339L800 370L790 398L775 400Z" fill="#4a9a9f" stroke="#256" />
    <path d="M778 352L798 347M778 357L795 353" stroke="#2a6f77" />
    <path d="M778 380l12-14v22l-12 14z" fill="#d9dcdd" stroke="#666" />
    <path d="M787 340h9v29h-9zM779 362h9v34h-9z" fill="#777b7d" stroke="#3f4446" />
    <ellipse cx="791" cy="338" rx="4" ry="3" fill="#85898b" stroke="#3f4446" />
    <ellipse cx="783" cy="362" rx="5" ry="3" fill="#85898b" stroke="#3f4446" />
    <path d="M503 318C488 345 477 380 472 410C466 430 466 450 472 462C482 480 500 494 518 502L540 480V318Z" fill="url(#shell)" stroke="#222" />
    <path d="M472 418C466 432 467 448 471 458C471 446 470 430 472 418Z" fill="#31617a" />
    <path d="M503 333C498 345 495 360 496 372L502 382" fill="none" stroke="#2b2725" />
    <path d="M519 470L518 500L545 508C600 517 680 530 750 538L770 541C808 534 846 508 860 486C870 468 872 450 868 434L863 418L760 470Z" fill="#24485c" stroke="#152c38" />
    <path d="M515 470H763L753 531C740 533 700 527 637 517L533 496C524 494 518 492 517 486Z" fill="url(#glass)" stroke="#14444c" strokeWidth="1.5" />
    <path d="M763 470L775 400L780 395C795 370 805 345 818 333L832 338C843 363 856 395 863 420C850 440 838 452 827 472C822 485 825 500 815 515C800 527 775 531 757 532Z" fill="url(#shell)" stroke="#1f1b1a" />
    <path d="M818 333L832 338L826 352C805 380 795 400 786 415L778 412L780 395C795 370 803 350 818 333Z" fill="#55504c" stroke="#2b2725" />
    <path d="M863 420C852 440 838 455 827 473L823 490M862 428C850 446 841 458 829 475L825 493" fill="none" stroke="#5c8aa0" />
    <path d="M824 490C822 505 815 517 800 525C785 530 768 532 757 533L752 538" fill="none" stroke="#101c22" />
    <path d="M533 493C541 489 543 480 556 482L712 504C730 506 732 521 744 525L755 525" fill="none" stroke="#17525a" strokeWidth="1.5" />
    <path d="M538 496C546 492 546 486 558 488L708 510C724 512 728 520 736 525M637 471V519M750 471V522L748 526" fill="none" stroke="#20646b" />
    <path d="M520 497L637 516L752 532" fill="none" stroke="#1b3e4f" strokeWidth="4" />
    <path d="M516 472L519 490C520 500 530 500 545 504L640 519L752 534L763 472" fill="none" stroke="#122b34" />
  </Model>
)

/* ---------- import dialog ---------- */

const Overlay = styled.div`
  position: absolute;
  inset: 0;
  padding: 113px 2px 0 0;
  display: flex;
  align-items: flex-start;
  justify-content: center;
`

const DialogBox = styled.form`
  width: 278px;
  border: 2px solid #a5a5a5;
  outline: 1px solid #d8d8d8;
  outline-offset: -3px;
  background: #efeff0;
`

const DialogTitle = styled.div`
  height: 16px;
  padding: 0 3px 0 11px;
  display: flex;
  align-items: center;
  border-bottom: 1px solid #ccc;
  background: linear-gradient(#f6f6f6, #e2e2e2);
  h2 {
    flex: 1;
    margin: 0;
    font-size: 9px;
    text-align: center;
  }
  button {
    width: 12px;
    font-size: 13px;
    font-weight: bold;
  }
`

const From = styled.p`
  margin: 0;
  padding: 12px 9px 7px;
  display: flex;
  gap: 5px;
  white-space: nowrap;
`

const Fields = styled.div`
  padding: 0 8px;
  display: flex;
  flex-direction: column;
  gap: 8px;
`

const Box = styled.fieldset`
  min-width: 0;
  height: ${props => props.$h}px;
  margin: 0;
  padding: ${props => props.$top}px 9px 0;
  border: 1px solid #c9c9c9;
  legend {
    padding: 0 4px;
    font-size: 7px;
    font-weight: bold;
    line-height: 8px;
  }
`

const Choice = styled.label`
  height: 14px;
  display: flex;
  align-items: center;
  gap: ${props => props.$gap || 5}px;
  white-space: nowrap;
  color: ${props => props.$off ? '#aaa' : 'inherit'};
`

const Radio = styled.input.attrs({ type: 'radio' })`
  appearance: none;
  width: 11px;
  height: 11px;
  border: 1px solid #999;
  border-radius: 50%;
  background: #fff;
  &:checked {
    background: radial-gradient(circle, #333 0 2px, #fff 3px);
  }
  &:disabled {
    opacity: .4;
  }
`

const Check = styled.input.attrs({ type: 'checkbox' })`
  appearance: none;
  width: 11px;
  height: 11px;
  border: 1px solid #777;
  background: #fff;
  &:checked:after {
    content: '';
    display: block;
    width: 4px;
    height: 8px;
    margin: -1px 0 0 3px;
    border: solid #222;
    border-width: 0 2px 2px 0;
    transform: rotate(40deg);
  }
`

const Indent = styled.div`
  padding: ${props => props.$y || 0}px 0 0 ${props => props.$x}px;
  display: flex;
  align-items: center;
`

const Line = styled.div`
  display: flex;
  gap: 3px;
`

const Picker = styled.span`
  flex: ${props => props.$w ? 'none' : 1};
  width: ${props => props.$w ? props.$w + 'px' : 'auto'};
  height: 17px;
  display: flex;
  align-items: center;
  border: 1px solid #bbb;
  background: linear-gradient(#f4f4f4, #fff);
  select {
    flex: 1;
    height: 15px;
    padding-left: 5px;
    appearance: none;
    outline: 0;
  }
  i {
    width: 11px;
    height: 15px;
    display: flex;
    align-items: center;
    justify-content: center;
    border-left: 1px solid #ccc;
  }
`

const PushButton = styled.button`
  width: ${props => props.$w}px;
  height: 17px;
  border: 1px solid #bbb;
  border-radius: 1px;
  background: linear-gradient(#fdfdfd, #ececec);
  font-weight: bold;
  ${props => props.$primary && css`
    border-color: #8bbfdc;
    background: linear-gradient(#c3e6f8, #8cccf0);
  `}
`

const ImportType = styled.div`
  padding-top: 8px;
  display: grid;
  grid-template-columns: 49px 1fr;
`

const NameRow = styled.div`
  height: 43px;
  margin-top: 12px;
  padding: 0 8px 0 9px;
  display: flex;
  align-items: center;
  gap: 2px;
  border-top: 1px solid #e6e6e6;
  border-bottom: 1px solid #e6e6e6;
`

const NameBox = styled.span`
  flex: 1;
  height: 17px;
  padding: 0 2px;
  display: flex;
  align-items: center;
  border: 1px solid #b5b5b5;
  background: #fff;
  input {
    field-sizing: content;
    outline: 0;
  }
  &:after {
    content: '';
    width: 1px;
    height: 11px;
    background: #222;
  }
`

const Buttons = styled.div`
  padding: 7px 8px 8px;
  display: flex;
  justify-content: flex-end;
  gap: 6px;
`

const Hover = styled.span`
  position: relative;
  svg {
    position: absolute;
    left: 14px;
    top: 5px;
  }
`

const ImportDialog = () => (
  <Overlay>
    <DialogBox onSubmit={e => e.preventDefault()}>
      <DialogTitle>
        <h2>Import New Model</h2>
        <button type="button" aria-label="Close">×</button>
      </DialogTitle>
      <From>
        <span>From:</span>
        <span>E:\Creo_Data\whatsnew\5692925_mittelschneider_kpl_asm.asm</span>
      </From>
      <Fields>
        <Box $h={58} $top={9}>
          <legend>Type</legend>
          <Indent $x={6}>
            <Choice $off $gap={7}><Radio name="type" disabled /><Icon name="partGrey" />Part</Choice>
          </Indent>
          <Indent $x={6}>
            <Choice $off $gap={7}><Radio name="type" disabled defaultChecked /><Icon name="asmGrey" />Assembly</Choice>
          </Indent>
        </Box>
        <Box $h={107} $top={5}>
          <legend>Profile</legend>
          <Line>
            <Picker>
              <select aria-label="Profile"><option>Current Profile</option></select>
              <i><Caret /></i>
            </Picker>
            <PushButton type="button" $w={50}>Details...</PushButton>
          </Line>
          <Indent $x={3} $y={5}>
            <Choice $gap={4}><Check defaultChecked />Use templates</Choice>
          </Indent>
          <ImportType>
            <span>Import type:</span>
            <div>
              <Choice><Radio name="import" defaultChecked />Automatic</Choice>
              <Choice><Radio name="import" />Geometry</Choice>
              <Choice><Radio name="import" />Facet</Choice>
            </div>
          </ImportType>
        </Box>
        <Box $h={41} $top={5}>
          <legend>Options</legend>
          <Indent $x={6}>
            <Choice $gap={4}><Check defaultChecked />Generate log file:</Choice>
            <Indent $x={7}><Choice><Radio name="log" defaultChecked />Short</Choice></Indent>
            <Indent $x={14}><Choice><Radio name="log" />Long</Choice></Indent>
          </Indent>
        </Box>
      </Fields>
      <NameRow>
        <label htmlFor="model-name">Name:</label>
        <NameBox><input id="model-name" type="text" defaultValue="5692925_mittelschneider_kpl" /></NameBox>
      </NameRow>
      <Buttons>
        <Hover>
          <PushButton $primary $w={43}>OK</PushButton>
          <svg width="11" height="15" viewBox="0 0 11 15" aria-hidden="true">
            <path d="M1 1v11l3-2 2 4 2-1-2-4h4z" fill="#fff" stroke="#222" />
          </svg>
        </Hover>
        <PushButton type="button" $w={43}>Cancel</PushButton>
      </Buttons>
    </DialogBox>
  </Overlay>
)

/* ---------- status bar ---------- */

const StatusBar = styled.footer`
  height: 28px;
  padding: 0 13px 0 4px;
  display: flex;
  align-items: center;
  border-top: 1px solid #777;
  border-bottom: 1px solid #888;
  background: #eeeff1;
`

const StatusButton = styled.button`
  width: ${props => props.$w}px;
  height: ${props => props.$h || 17}px;
  margin-right: 4px;
  display: flex;
  align-items: center;
  justify-content: center;
  border: 1px solid ${props => props.$pressed ? '#999' : '#ccc'};
  background: ${props => props.$pressed ? '#e2e2e2' : '#fafafa'};
`

const Spacer = styled.span`
  flex: 1;
`

const Lights = styled.span`
  height: 24px;
  margin-right: 5px;
  padding-left: 4px;
  display: flex;
  align-items: center;
  gap: 2px;
  border-left: 1px solid #ddd;
  i {
    width: 4px;
    height: 4px;
    background: #ccc;
  }
  i:first-child {
    width: 9px;
    height: 9px;
    border-radius: 50%;
    background: #5dbb5d;
  }
`

const Gap = styled.span`
  width: 68px;
`

const App = () => (
  <Page>
    <GlobalStyle />
    <Window>
      <TitleBar>
        <QuickAccess>
          <PlainButton aria-label="Window menu"><Icon name="app" /></PlainButton>
          <Rule />
          <PlainButton aria-label="New"><Icon name="doc" /></PlainButton>
          <PlainButton aria-label="Open"><Icon name="open" /></PlainButton>
          <PlainButton aria-label="Save"><Icon name="save" /></PlainButton>
          <PlainButton $gap={5} aria-label="Undo"><Icon name="undo" /><Caret /></PlainButton>
          <PlainButton $gap={5} aria-label="Redo"><Icon name="redo" /><Caret color="#aaa" /></PlainButton>
          <PlainButton aria-label="Regenerate"><Icon name="regenSmall" /></PlainButton>
          <PlainButton $gap={4} aria-label="Windows"><Icon name="windows" /><Caret /></PlainButton>
          <PlainButton aria-label="Close window"><Icon name="closeWin" /></PlainButton>
          <Rule />
          <Caret color="#333" />
        </QuickAccess>
        <Title>JS488488_SHAVER_DEVICE (Active) - PTC Creo Parametric</Title>
        <WindowButtons>
          <PlainButton aria-label="Minimize"><Icon name="min" /></PlainButton>
          <PlainButton aria-label="Restore"><Icon name="restore" /></PlainButton>
          <PlainButton aria-label="Close"><Icon name="close" /></PlainButton>
        </WindowButtons>
      </TitleBar>
      <TabRow>
        <Tabs>
          <Tab $pad={4}>File <Caret /></Tab>
          <Tab $pad={3} aria-label="Tab list" />
          <Tab $active>Model</Tab>
          {ribbonTabs.map(name => <Tab key={name}>{name}</Tab>)}
        </Tabs>
        <Helpers>
          <PlainButton aria-label="Minimize ribbon"><Icon name="chevrons" /></PlainButton>
          <PlainButton aria-label="Command search"><Icon name="search" /></PlainButton>
          <PlainButton $gap={5} aria-label="Learning connector"><Icon name="learn" /><Caret /></PlainButton>
          <PlainButton aria-label="Help"><Icon name="help" /></PlainButton>
        </Helpers>
      </TabRow>
      <Ribbon />
      <Workspace>
        <ModelTree />
        <Viewport>
          <Shaver />
          <ViewTools>
            {viewTools.map(([icon, label]) => (
              <ViewTool key={label} aria-label={label}><Icon name={icon} /></ViewTool>
            ))}
          </ViewTools>
          <ActiveNote>Active Sub-Assembly:JS5184_HEAD_DEVICE</ActiveNote>
        </Viewport>
      </Workspace>
      <StatusBar>
        <StatusButton $w={17} $pressed aria-label="Toggle tree"><Icon name="nodes" /></StatusButton>
        <StatusButton $w={17} aria-label="Toggle browser"><Icon name="browser" /></StatusButton>
        <Rule $h={20} />
        <Spacer />
        <Lights><i /><i /><i /></Lights>
        <StatusButton $w={31} $h={20} aria-label="Find"><Icon name="find" /></StatusButton>
        <StatusButton $w={30} $h={20} aria-label="Selection box"><Icon name="region" /></StatusButton>
        <Gap />
        <Picker $w={116}>
          <select aria-label="Selection filter"><option>Smart</option></select>
          <i><Caret /></i>
        </Picker>
      </StatusBar>
      <ImportDialog />
    </Window>
  </Page>
)

export default App
